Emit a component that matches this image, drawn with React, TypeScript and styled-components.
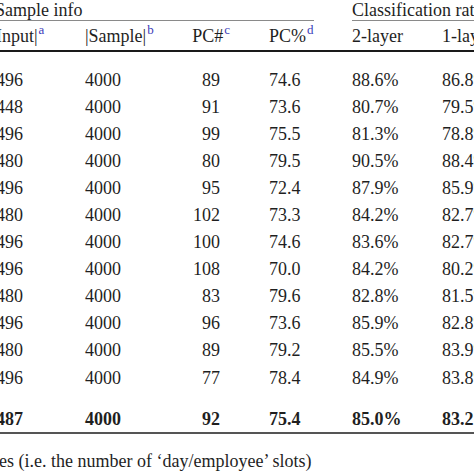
import React from 'react';
import styled, { createGlobalStyle } from 'styled-components';

const GlobalStyle = createGlobalStyle`
  html, body {
    margin: 0;
    padding: 0;
    background: #ffffff;
    overflow: hidden;
  }
  body {
    font-family: "Liberation Serif", "Times New Roman", serif;
    color: #1f1f1f;
  }
`;

const Page = styled.div`
  width: 474px;
  height: 474px;
  overflow: hidden;
  display: flex;
  flex-direction: column;
`;

const Table = styled.table`
  border-collapse: collapse;
  table-layout: fixed;
  width: 560px;
  margin-left: -4px;
  font-size: 18px;
  line-height: 20px;
`;

type Align = 'left' | 'right';

const Cell = styled.td<{ $align?: Align; $pl?: number; $bold?: boolean }>`
  padding: 0 0 0 ${(p) => p.$pl ?? 0}px;
  height: 27.1px;
  text-align: ${(p) => p.$align ?? 'left'};
  font-weight: ${(p) => (p.$bold ? 700 : 400)};
  white-space: nowrap;
  vertical-align: middle;
`;

const HeadCell = styled.th<{ $align?: Align; $pl?: number }>`
  padding: 0 0 0 ${(p) => p.$pl ?? 0}px;
  height: 29px;
  text-align: ${(p) => p.$align ?? 'left'};
  font-weight: 400;
  white-space: nowrap;
  vertical-align: middle;
  border-bottom: 2px solid #1a1a1a;
`;

const GroupCell = styled.th`
  padding: 0;
  height: 21px;
  font-weight: 400;
  text-align: left;
  vertical-align: bottom;
`;

const GroupLabel = styled.div<{ $indent: number }>`
  margin-left: ${(p) => p.$indent}px;
  padding-bottom: 1px;
  border-bottom: 1px solid #8a8a8a;
  white-space: nowrap;
  line-height: 18px;
`;

const Sup = styled.sup`
  font-size: 13px;
  color: #3a3ab8;
  vertical-align: 8px;
  line-height: 0;
  margin-left: 1px;
`;

const HashHead = styled.span`
  margin-right: -10px;
`;

const Spacer = styled.tr<{ $h: number }>`
  height: ${(p) => p.$h}px;
`;

const TotalRow = styled.tr`
  border-bottom: 2px solid #555555;
`;

const Footnote = styled.p`
  margin: 16px 0 0 -1px;
  font-size: 18px;
  line-height: 22px;
  white-space: nowrap;
`;

const rows: [string, string, string, string, string, string][] = [
  ['496', '4000', '89', '74.6', '88.6%', '86.8%'],
  ['448', '4000', '91', '73.6', '80.7%', '79.5%'],
  ['496', '4000', '99', '75.5', '81.3%', '78.8%'],
  ['480', '4000', '80', '79.5', '90.5%', '88.4%'],
  ['496', '4000', '95', '72.4', '87.9%', '85.9%'],
  ['480', '4000', '102', '73.3', '84.2%', '82.7%'],
  ['496', '4000', '100', '74.6', '83.6%', '82.7%'],
  ['496', '4000', '108', '70.0', '84.2%', '80.2%'],
  ['480', '4000', '83', '79.6', '82.8%', '81.5%'],
  ['496', '4000', '96', '73.6', '85.9%', '82.8%'],
  ['480', '4000', '89', '79.2', '85.5%', '83.9%'],
  ['496', '4000', '77', '78.4', '84.9%', '83.8%'],
];

const total = ['487', '4000', '92', '75.4', '85.0%', '83.2%'];

const DataCells: React.FC<{ values: string[]; bold?: boolean }> = ({ values, bold }) => (
  <>
    <Cell $bold={bold}>{values[0]}</Cell>
    <Cell $bold={bold}>{values[1]}</Cell>
    <Cell $bold={bold} $align="right">{values[2]}</Cell>
    <Cell $bold={bold} $pl={49}>{values[3]}</Cell>
    <Cell $bold={bold} $pl={38}>{values[4]}</Cell>
    <Cell $bold={bold}>{values[5]}</Cell>
  </>
);

export default function App() {
  return (
    <Page>
      <GlobalStyle />
      <Table>
        <colgroup>
          <col style={{ width: 89 }} />
          <col style={{ width: 75 }} />
          <col style={{ width: 60 }} />
          <col style={{ width: 94 }} />
          <col style={{ width: 128 }} />
          <col style={{ width: 114 }} />
        </colgroup>
        <thead>
          <tr>
            <GroupCell colSpan={4}>
              <GroupLabel $indent={-1}>Sample info</GroupLabel>
            </GroupCell>
            <GroupCell colSpan={2}>
              <GroupLabel $indent={38}>Classification rates</GroupLabel>
            </GroupCell>
          </tr>
          <tr>
            <HeadCell>
              Input|<Sup>a</Sup>
            </HeadCell>
            <HeadCell>
              |Sample|<Sup>b</Sup>
            </HeadCell>
            <HeadCell $align="right">
              <HashHead>
                PC#<Sup>c</Sup>
              </HashHead>
            </HeadCell>
            <HeadCell $pl={49}>
              PC%<Sup>d</Sup>
            </HeadCell>
            <HeadCell $pl={38}>2-layer</HeadCell>
            <HeadCell>1-layer</HeadCell>
          </tr>
        </thead>
        <tbody>
          <Spacer $h={15} />
          {rows.map((r, i) => (
            <tr key={i}>
              <DataCells values={r} />
            </tr>
          ))}
          <Spacer $h={14} />
          <TotalRow>
            <DataCells values={total} bold />
          </TotalRow>
        </tbody>
      </Table>
      <Footnote>es (i.e. the number of ‘day/employee’ slots)</Footnote>
    </Page>
  );
}
